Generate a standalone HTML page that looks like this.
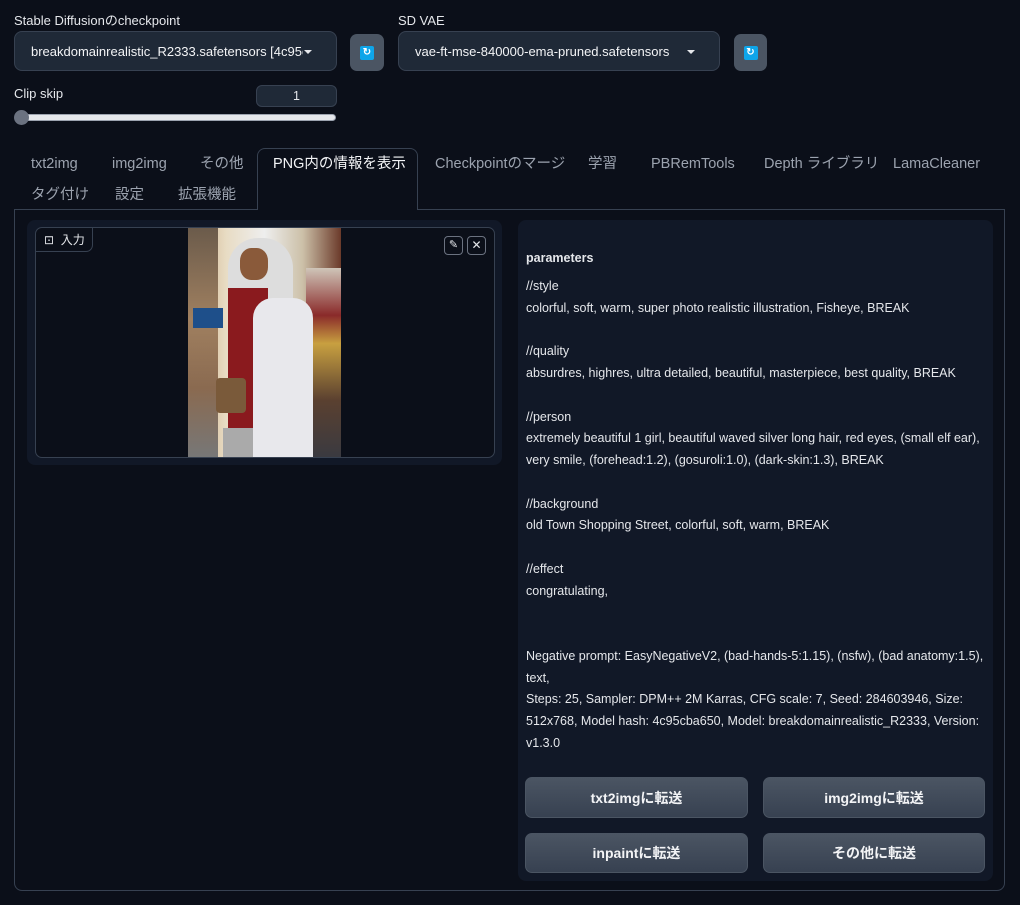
<!DOCTYPE html>
<html><head><meta charset="utf-8"><style>
*{box-sizing:border-box;margin:0;padding:0}
body{width:1020px;height:905px;background:#0b0f19;font-family:"Liberation Sans","Noto Sans CJK JP",sans-serif;color:#e5e7eb;position:relative;overflow:hidden}
.a{position:absolute}
.lbl{font-size:13px;color:#e5e7eb;line-height:16px}
.dd{background:#1f2937;border:1px solid #374151;border-radius:8px;font-size:13px;color:#f3f4f6;padding:0 0 0 16px;line-height:39px;white-space:nowrap}
.dd .t{display:block;overflow:hidden;width:272px}
.dd .c{position:absolute;right:24px;top:18px;border-left:4px solid transparent;border-right:4px solid transparent;border-top:4px solid #e5e7eb}
.rb{background:#4b5563;border-radius:7px;display:flex;align-items:center;justify-content:center}
.rb i{width:14px;height:14px;background:#0ea5e9;border-radius:2px;display:block;color:#fff;font-size:10px;font-style:normal;text-align:center;line-height:14px;font-weight:bold}
.tab,.tab2{font-size:14.5px;color:#9ca3af;line-height:20px;height:20px;white-space:nowrap}
.tab{top:154px}
.tab2{top:185px}
.txt{font-size:12.5px;color:#e5e7eb;line-height:21.75px}
.btn{background:linear-gradient(#4b5563,#374151);border:1px solid #4b5563;border-radius:7px;font-weight:bold;font-size:14px;color:#f3f4f6;display:flex;align-items:center;justify-content:center;line-height:18px}
</style></head><body>
<div class="a lbl" style="left:14px;top:13px">Stable Diffusionのcheckpoint</div>
<div class="a dd" style="left:14px;top:31px;width:323px;height:40px"><span class="t">breakdomainrealistic_R2333.safetensors [4c95c</span><span class="c"></span></div>
<div class="a rb" style="left:350px;top:34px;width:34px;height:37px"><i>↻</i></div>
<div class="a lbl" style="left:398px;top:13px">SD VAE</div>
<div class="a dd" style="left:398px;top:31px;width:322px;height:40px"><span class="t">vae-ft-mse-840000-ema-pruned.safetensors</span><span class="c"></span></div>
<div class="a rb" style="left:734px;top:34px;width:33px;height:37px"><i>↻</i></div>
<div class="a lbl" style="left:14px;top:86px">Clip skip</div>
<div class="a" style="left:256px;top:85px;width:81px;height:22px;background:#1f2937;border:1px solid #374151;border-radius:6px;font-size:12.5px;text-align:center;line-height:20px">1</div>
<div class="a" style="left:16px;top:114px;width:320px;height:7px;background:#e5e7eb;border-radius:4px;border:1px solid #9ca3af"></div>
<div class="a" style="left:14px;top:110px;width:15px;height:15px;background:#6b7280;border-radius:50%"></div>

<div class="a" style="left:257px;top:148px;width:161px;height:62px;border:1px solid #374151;border-bottom:none;border-radius:8px 8px 0 0;background:#0b0f19"></div>
<div class="a tab" style="left:31px">txt2img</div>
<div class="a tab" style="left:112px">img2img</div>
<div class="a tab" style="left:200px">その他</div>
<div class="a tab" style="left:273px;color:#f3f4f6">PNG内の情報を表示</div>
<div class="a tab" style="left:435px">Checkpointのマージ</div>
<div class="a tab" style="left:588px">学習</div>
<div class="a tab" style="left:651px">PBRemTools</div>
<div class="a tab" style="left:764px">Depth ライブラリ</div>
<div class="a tab" style="left:893px">LamaCleaner</div>
<div class="a tab2" style="left:31px">タグ付け</div>
<div class="a tab2" style="left:115px">設定</div>
<div class="a tab2" style="left:178px">拡張機能</div>

<div class="a" style="left:14px;top:209px;width:991px;height:682px;border:1px solid #374151;border-radius:0 0 8px 8px"></div>
<div class="a" style="left:258px;top:208px;width:159px;height:3px;background:#0b0f19"></div>

<div class="a" style="left:27px;top:220px;width:475px;height:245px;background:#111827;border-radius:8px"></div>
<div class="a" style="left:35px;top:227px;width:460px;height:231px;border:1px solid #374151;border-radius:7px;background:#0b0f19"></div>
<div class="a" style="left:188px;top:228px;width:153px;height:229px;overflow:hidden;background:linear-gradient(90deg,#c9a67a 0%,#e8dcc4 25%,#eee 50%,#ccc0a8 75%,#6b3a2a 100%)">
 <div class="a" style="left:0;top:0;width:30px;height:229px;background:linear-gradient(#6b5b4b,#a08060 40%,#8a6a50 70%,#777)"></div>
 <div class="a" style="left:5px;top:80px;width:30px;height:20px;background:#1e4f8a"></div>
 <div class="a" style="left:118px;top:40px;width:35px;height:189px;background:linear-gradient(#cfc5b8,#8a2a2a 25%,#c8a040 40%,#5a4030 70%,#3a3a40)"></div>
 <div class="a" style="left:40px;top:10px;width:65px;height:90px;background:#ddd;border-radius:30px 30px 10px 10px"></div>
 <div class="a" style="left:52px;top:20px;width:28px;height:32px;background:#8a5a3a;border-radius:40%"></div>
 <div class="a" style="left:40px;top:60px;width:40px;height:169px;background:#8a1a1e"></div>
 <div class="a" style="left:65px;top:70px;width:60px;height:159px;background:#e8e8ec;border-radius:20px 20px 0 0"></div>
 <div class="a" style="left:28px;top:150px;width:30px;height:35px;background:#7a5a3a;border-radius:4px"></div>
 <div class="a" style="left:35px;top:200px;width:30px;height:29px;background:#aaa"></div>
</div>
<div class="a" style="left:36px;top:228px;width:57px;height:24px;border:1px solid #374151;border-top:none;border-left:none;border-radius:0 0 7px 0;font-size:12px;padding:0 0 0 8px;line-height:24px;color:#e5e7eb">⊡&nbsp;&nbsp;入力</div>
<div class="a" style="left:444px;top:236px;width:19px;height:19px;border:1px solid #6b7280;border-radius:4px;font-size:11px;text-align:center;line-height:17px">✎</div>
<div class="a" style="left:467px;top:236px;width:19px;height:19px;border:1px solid #6b7280;border-radius:4px;font-size:12px;text-align:center;line-height:17px">✕</div>

<div class="a" style="left:518px;top:220px;width:475px;height:661px;background:#111827;border-radius:8px"></div>
<div class="a txt" style="left:526px;top:248px;font-weight:bold">parameters</div>
<div class="a txt" style="left:526px;top:276px;width:462px">//style<br>colorful, soft, warm, super photo realistic illustration, Fisheye, BREAK<br><br>//quality<br>absurdres, highres, ultra detailed, beautiful, masterpiece, best quality, BREAK<br><br>//person<br>extremely beautiful 1 girl, beautiful waved silver long hair, red eyes, (small elf ear),<br>very smile, (forehead:1.2), (gosuroli:1.0), (dark-skin:1.3), BREAK<br><br>//background<br>old Town Shopping Street, colorful, soft, warm, BREAK<br><br>//effect<br>congratulating,<br><br><br>Negative prompt: EasyNegativeV2, (bad-hands-5:1.15), (nsfw), (bad anatomy:1.5),<br>text,<br>Steps: 25, Sampler: DPM++ 2M Karras, CFG scale: 7, Seed: 284603946, Size:<br>512x768, Model hash: 4c95cba650, Model: breakdomainrealistic_R2333, Version:<br>v1.3.0</div>
<div class="a btn" style="left:525px;top:777px;width:223px;height:41px">txt2imgに転送</div>
<div class="a btn" style="left:763px;top:777px;width:222px;height:41px">img2imgに転送</div>
<div class="a btn" style="left:525px;top:833px;width:223px;height:40px">inpaintに転送</div>
<div class="a btn" style="left:763px;top:833px;width:222px;height:40px">その他に転送</div>
</body></html>
